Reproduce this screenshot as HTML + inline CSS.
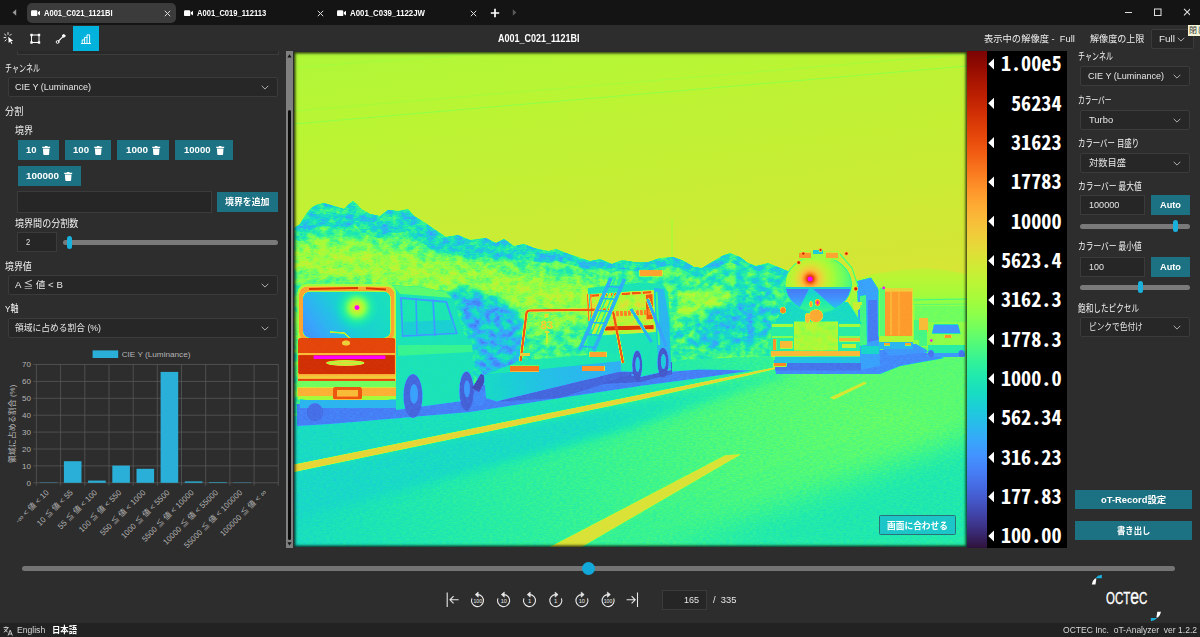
<!DOCTYPE html>
<html lang="ja"><head><meta charset="utf-8"><title>oT-Analyzer</title>
<style>
*{box-sizing:border-box;margin:0;padding:0}
html,body{width:1200px;height:637px;overflow:hidden;background:#2d2d2d;color:#e8e8e8;
 font-family:"Liberation Sans","Noto Sans CJK JP",sans-serif;font-size:10px}
.a{position:absolute}
.t{position:absolute;display:inline-block;white-space:pre;line-height:14px;height:14px;transform-origin:0 50%}
#title{left:0;top:0;width:1200px;height:25px;background:#141414}
.tab{position:absolute;top:3px;height:20px;border-radius:5px}
.tab.on{background:#3b3b3b}
#status{left:0;top:623px;width:1200px;height:14px;background:#222}
.sel{position:absolute;height:20px;background:#272727;border:1px solid #3b3b3b;border-radius:2px}
.sel svg{position:absolute;right:8.5px;top:7px}
.chip{position:absolute;height:20px;background:#1c7283}
.chip svg{position:absolute;right:8.5px;top:5.5px}
.btn{position:absolute;background:#1c7283}
.inp{position:absolute;background:#262626;border:1px solid #3b3b3b}
.track{position:absolute;height:5px;border-radius:3px;background:#7a7a7a}
.thumb{position:absolute;background:#19b0dc;border-radius:3px}
</style></head><body>
<div id="title" class="a">
<svg class="a" style="left:12px;top:9px" width="5" height="7" viewBox="0 0 5 7"><path d="M4.2 0.3 V6.7 L0.6 3.5 Z" fill="#9a9a9a"/></svg>
<div class="tab on" style="left:27px;width:149px"></div><svg class="a" style="left:30.8px;top:9.6px" width="9.6" height="6.4" viewBox="0 0 9.6 6.4" fill="#fff"><rect x="0" y="0.2" width="6.3" height="6" rx="1.2"/><path d="M6.9 2.3 L9.4 0.5 V5.9 L6.9 4.1 Z"/></svg>
<svg class="a" style="left:163.5px;top:9.5px" width="7" height="7" viewBox="0 0 7 7" fill="none" stroke="#dcdcdc" stroke-width="1"><path d="M0.8 0.8 L6.2 6.2 M6.2 0.8 L0.8 6.2"/></svg>
<div class="tab" style="left:180px;width:149px"></div><svg class="a" style="left:183.8px;top:9.6px" width="9.6" height="6.4" viewBox="0 0 9.6 6.4" fill="#fff"><rect x="0" y="0.2" width="6.3" height="6" rx="1.2"/><path d="M6.9 2.3 L9.4 0.5 V5.9 L6.9 4.1 Z"/></svg>
<svg class="a" style="left:316.5px;top:9.5px" width="7" height="7" viewBox="0 0 7 7" fill="none" stroke="#dcdcdc" stroke-width="1"><path d="M0.8 0.8 L6.2 6.2 M6.2 0.8 L0.8 6.2"/></svg>
<div class="tab" style="left:333px;width:149px"></div><svg class="a" style="left:336.8px;top:9.6px" width="9.6" height="6.4" viewBox="0 0 9.6 6.4" fill="#fff"><rect x="0" y="0.2" width="6.3" height="6" rx="1.2"/><path d="M6.9 2.3 L9.4 0.5 V5.9 L6.9 4.1 Z"/></svg>
<svg class="a" style="left:469.5px;top:9.5px" width="7" height="7" viewBox="0 0 7 7" fill="none" stroke="#dcdcdc" stroke-width="1"><path d="M0.8 0.8 L6.2 6.2 M6.2 0.8 L0.8 6.2"/></svg>
<svg class="a" style="left:489.5px;top:8px" width="10" height="10" viewBox="0 0 10 10" fill="none" stroke="#fff" stroke-width="1.7"><path d="M5 0.8 V9.2 M0.8 5 H9.2"/></svg>
<svg class="a" style="left:512px;top:9px" width="5" height="7" viewBox="0 0 5 7"><path d="M0.8 0.3 V6.7 L4.4 3.5 Z" fill="#5a5a5a"/></svg>
<svg class="a" style="left:1120px;top:6px" width="70" height="14" viewBox="0 0 70 14" fill="none" stroke="#e0e0e0" stroke-width="1"><path d="M5 6.5 H12"/><rect x="34.5" y="3" width="6.5" height="6.5"/><path d="M64 2.8 L70.5 9.3 M70.5 2.8 L64 9.3" stroke-width="1.1"/></svg>
</div>
<span class="t" id="t1" style="left:44px;top:5.8px;font-size:8.6px;font-weight:bold;color:#fff;transform:scaleX(0.8794);">A001_C021_1121BI</span>
<span class="t" id="t2" style="left:196.7px;top:5.8px;font-size:8.6px;font-weight:bold;color:#fff;transform:scaleX(0.8840);">A001_C019_112113</span>
<span class="t" id="t3" style="left:350px;top:5.8px;font-size:8.6px;font-weight:bold;color:#fff;transform:scaleX(0.9125);">A001_C039_1122JW</span>
<div class="a" style="left:73px;top:25.5px;width:26px;height:25.5px;background:#00b2dc"></div>
<svg class="a" style="left:0;top:25px" width="110" height="27" viewBox="0 0 110 27" fill="none" stroke="#fff" stroke-width="1.2" stroke-linecap="round">
 <path d="M8.2 11.8 L13.2 15.9 L11 16.1 L12.3 18.5 L11.5 18.9 L10.2 16.6 L8.7 18 Z" fill="#fff" stroke="none"/>
 <path d="M4.6 9.2 L6 10.4 M8 7.6 V9.4 M11.2 9.2 L10 10.4 M4 12.6 H5.8 M5 16 L6.2 14.8" stroke-width="0.9"/>
 <rect x="31.5" y="10" width="7.5" height="7.5" stroke-width="1"/>
 <g fill="#fff" stroke="none"><rect x="30.3" y="8.8" width="2.4" height="2.4"/><rect x="37.8" y="8.8" width="2.4" height="2.4"/><rect x="30.3" y="16.3" width="2.4" height="2.4"/><rect x="37.8" y="16.3" width="2.4" height="2.4"/></g>
 <path d="M58.4 16.2 L63 11.6" stroke-width="1.2"/>
 <circle cx="57.6" cy="17" r="1.4" stroke-width="0.9"/><circle cx="63.7" cy="10.9" r="1.3" fill="#fff" stroke-width="0.9"/>
 <path d="M82.2 18.4 V14.9 H84.6 V18.4 M84.6 14.9 V12.4 H87 V18.4 M87 12.4 V9.9 H89.6 V18.4 M81.4 18.5 H90.6" stroke-width="0.95" stroke-linecap="square"/>
</svg>
<span class="t" id="t4" style="left:497.5px;top:31.8px;font-size:10px;font-weight:bold;color:#fff;transform:scaleX(0.8992);">A001_C021_1121BI</span>
<span class="t" id="t5" style="left:983.6px;top:31.8px;font-size:9.6px;color:#ececec;transform:scaleX(0.9679);">表示中の解像度 -  Full</span>
<span class="t" id="t6" style="left:1090px;top:31.8px;font-size:9.6px;color:#ececec;transform:scaleX(0.9451);">解像度の上限</span>
<div class="sel" style="left:1151px;top:29px;width:43px;height:20px"><svg width="8" height="5" viewBox="0 0 8 5" fill="none" stroke="#b0b0b0" stroke-width="1"><path d="M0.7 0.8 L4 4.1 L7.3 0.8"/></svg></div>
<span class="t" id="t7" style="left:1159px;top:32px;font-size:9.3px;color:#e6e6e6;transform:scaleX(1.0678);">Full</span>
<div class="a" style="left:1188px;top:25px;width:12px;height:11px;background:#f5f5d8;color:#333;font-size:8px;line-height:11px;overflow:hidden;padding-left:1px;white-space:nowrap">閉じ</div>
<div class="a" style="left:17px;top:51px;width:262px;height:3.5px;border:1px solid #3c3c3c;border-top:none;background:#292929"></div>
<span class="t" id="t8" style="left:5px;top:61.5px;font-size:9.8px;color:#f4f4f4;transform:scaleX(0.7186);">チャンネル</span>
<div class="sel" style="left:8px;top:77px;width:270px;height:20px"><svg width="8" height="5" viewBox="0 0 8 5" fill="none" stroke="#b0b0b0" stroke-width="1"><path d="M0.7 0.8 L4 4.1 L7.3 0.8"/></svg></div>
<span class="t" id="t9" style="left:15px;top:80.2px;font-size:9.3px;color:#e6e6e6;transform:scaleX(0.9718);">CIE Y (Luminance)</span>
<span class="t" id="t10" style="left:4.7px;top:105px;font-size:9.8px;color:#f4f4f4;transform:scaleX(0.9340);">分割</span>
<span class="t" id="t11" style="left:15px;top:124.3px;font-size:9.8px;color:#f4f4f4;transform:scaleX(0.9187);">境界</span>
<div class="chip" style="left:18px;top:140px;width:41px"><svg width="8.4" height="9" viewBox="0 0 8 9" fill="#fff"><path d="M2.7 0 H5.3 V0.8 H8 V1.9 H0 V0.8 H2.7 Z M0.7 2.6 H7.3 L6.9 8.2 Q6.85 9 6.1 9 H1.9 Q1.15 9 1.1 8.2 Z"/></svg></div>
<span class="t" id="t12" style="left:26px;top:143px;font-size:9px;font-weight:bold;color:#fff;transform:scaleX(1.0484);">10</span>
<div class="chip" style="left:65px;top:140px;width:46px"><svg width="8.4" height="9" viewBox="0 0 8 9" fill="#fff"><path d="M2.7 0 H5.3 V0.8 H8 V1.9 H0 V0.8 H2.7 Z M0.7 2.6 H7.3 L6.9 8.2 Q6.85 9 6.1 9 H1.9 Q1.15 9 1.1 8.2 Z"/></svg></div>
<span class="t" id="t13" style="left:73px;top:143px;font-size:9px;font-weight:bold;color:#fff;transform:scaleX(1.0644);">100</span>
<div class="chip" style="left:117px;top:140px;width:52px"><svg width="8.4" height="9" viewBox="0 0 8 9" fill="#fff"><path d="M2.7 0 H5.3 V0.8 H8 V1.9 H0 V0.8 H2.7 Z M0.7 2.6 H7.3 L6.9 8.2 Q6.85 9 6.1 9 H1.9 Q1.15 9 1.1 8.2 Z"/></svg></div>
<span class="t" id="t14" style="left:125.5px;top:143px;font-size:9px;font-weight:bold;color:#fff;transform:scaleX(1.0983);">1000</span>
<div class="chip" style="left:175px;top:140px;width:58px"><svg width="8.4" height="9" viewBox="0 0 8 9" fill="#fff"><path d="M2.7 0 H5.3 V0.8 H8 V1.9 H0 V0.8 H2.7 Z M0.7 2.6 H7.3 L6.9 8.2 Q6.85 9 6.1 9 H1.9 Q1.15 9 1.1 8.2 Z"/></svg></div>
<span class="t" id="t15" style="left:183.5px;top:143px;font-size:9px;font-weight:bold;color:#fff;transform:scaleX(1.0587);">10000</span>
<div class="chip" style="left:18px;top:166px;width:63px"><svg width="8.4" height="9" viewBox="0 0 8 9" fill="#fff"><path d="M2.7 0 H5.3 V0.8 H8 V1.9 H0 V0.8 H2.7 Z M0.7 2.6 H7.3 L6.9 8.2 Q6.85 9 6.1 9 H1.9 Q1.15 9 1.1 8.2 Z"/></svg></div>
<span class="t" id="t16" style="left:26px;top:169px;font-size:9px;font-weight:bold;color:#fff;transform:scaleX(1.0983);">100000</span>
<div class="inp" style="left:17px;top:191px;width:195px;height:21.5px"></div>
<div class="btn" style="left:217px;top:192px;width:61px;height:20px"></div>
<span class="t" id="t17" style="left:225.3px;top:195px;font-size:9.2px;font-weight:bold;color:#fff;transform:scaleX(0.9687);">境界を追加</span>
<span class="t" id="t18" style="left:15px;top:217.4px;font-size:9.8px;color:#f4f4f4;transform:scaleX(0.9245);">境界間の分割数</span>
<div class="inp" style="left:17px;top:232px;width:40px;height:20px"></div>
<span class="t" id="t19" style="left:25.7px;top:235.3px;font-size:9.3px;color:#e6e6e6;transform:scaleX(0.8121);">2</span>
<div class="track" style="left:63px;top:240px;width:215px"></div><div class="thumb" style="left:67px;top:236px;width:5px;height:13px"></div>
<span class="t" id="t20" style="left:4.7px;top:259.5px;font-size:9.8px;color:#f4f4f4;transform:scaleX(0.9085);">境界値</span>
<div class="sel" style="left:8px;top:275px;width:270px;height:20px"><svg width="8" height="5" viewBox="0 0 8 5" fill="none" stroke="#b0b0b0" stroke-width="1"><path d="M0.7 0.8 L4 4.1 L7.3 0.8"/></svg></div>
<span class="t" id="t21" style="left:15px;top:278.3px;font-size:9.3px;color:#e6e6e6;transform:scaleX(1.0335);">A ≦ 値 &lt; B</span>
<span class="t" id="t22" style="left:4.7px;top:302.3px;font-size:9.8px;color:#f4f4f4;transform:scaleX(0.8260);">Y軸</span>
<div class="sel" style="left:8px;top:318px;width:270px;height:20px"><svg width="8" height="5" viewBox="0 0 8 5" fill="none" stroke="#b0b0b0" stroke-width="1"><path d="M0.7 0.8 L4 4.1 L7.3 0.8"/></svg></div>
<span class="t" id="t23" style="left:15px;top:321.3px;font-size:9.3px;color:#e6e6e6;transform:scaleX(0.9407);">領域に占める割合 (%)</span>
<svg class="a" style="left:0;top:340px" width="286" height="210" viewBox="0 340 286 210" font-family="Liberation Sans, Noto Sans CJK JP, sans-serif">
<rect x="92.6" y="350.4" width="25.6" height="7.6" fill="#2ab0d8"/>
<text x="121.7" y="356.6" font-size="8" fill="#b4b4b4" textLength="68.8" lengthAdjust="spacingAndGlyphs">CIE Y (Luminance)</text>
<path d="M33.4 482.8 H278.3 M33.4 465.9 H278.3 M33.4 449.0 H278.3 M33.4 432.1 H278.3 M33.4 415.2 H278.3 M33.4 398.3 H278.3 M33.4 381.4 H278.3 M33.4 364.5 H278.3 M36.4 364.5 V485.8 M60.6 364.5 V485.8 M84.8 364.5 V485.8 M109.0 364.5 V485.8 M133.2 364.5 V485.8 M157.3 364.5 V485.8 M181.5 364.5 V485.8 M205.7 364.5 V485.8 M229.9 364.5 V485.8 M254.1 364.5 V485.8 M278.3 364.5 V485.8" stroke="#575757" stroke-width="0.8" fill="none"/>
<text x="31" y="485.7" font-size="8" fill="#b4b4b4" text-anchor="end">0</text>
<text x="31" y="468.8" font-size="8" fill="#b4b4b4" text-anchor="end">10</text>
<text x="31" y="451.9" font-size="8" fill="#b4b4b4" text-anchor="end">20</text>
<text x="31" y="435.0" font-size="8" fill="#b4b4b4" text-anchor="end">30</text>
<text x="31" y="418.1" font-size="8" fill="#b4b4b4" text-anchor="end">40</text>
<text x="31" y="401.2" font-size="8" fill="#b4b4b4" text-anchor="end">50</text>
<text x="31" y="384.3" font-size="8" fill="#b4b4b4" text-anchor="end">60</text>
<text x="31" y="367.4" font-size="8" fill="#b4b4b4" text-anchor="end">70</text>
<rect x="39.7" y="482.5" width="17.6" height="0.3" fill="#2ab0d8"/>
<rect x="63.9" y="461.2" width="17.6" height="21.6" fill="#2ab0d8"/>
<rect x="88.1" y="480.6" width="17.6" height="2.2" fill="#2ab0d8"/>
<rect x="112.3" y="465.6" width="17.6" height="17.2" fill="#2ab0d8"/>
<rect x="136.5" y="468.8" width="17.6" height="14.0" fill="#2ab0d8"/>
<rect x="160.6" y="371.9" width="17.6" height="110.9" fill="#2ab0d8"/>
<rect x="184.8" y="481.4" width="17.6" height="1.4" fill="#2ab0d8"/>
<rect x="209.0" y="482.2" width="17.6" height="0.6" fill="#2ab0d8"/>
<rect x="233.2" y="482.5" width="17.6" height="0.3" fill="#2ab0d8"/>
<text transform="translate(49.3 493.0) rotate(-45)" font-size="8" fill="#b4b4b4" text-anchor="end">-∞ &lt; 値 &lt; 10</text>
<text transform="translate(73.5 493.0) rotate(-45)" font-size="8" fill="#b4b4b4" text-anchor="end">10 ≦ 値 &lt; 55</text>
<text transform="translate(97.7 493.0) rotate(-45)" font-size="8" fill="#b4b4b4" text-anchor="end">55 ≦ 値 &lt; 100</text>
<text transform="translate(121.9 493.0) rotate(-45)" font-size="8" fill="#b4b4b4" text-anchor="end">100 ≦ 値 &lt; 550</text>
<text transform="translate(146.1 493.0) rotate(-45)" font-size="8" fill="#b4b4b4" text-anchor="end">550 ≦ 値 &lt; 1000</text>
<text transform="translate(170.2 493.0) rotate(-45)" font-size="8" fill="#b4b4b4" text-anchor="end">1000 ≦ 値 &lt; 5500</text>
<text transform="translate(194.4 493.0) rotate(-45)" font-size="8" fill="#b4b4b4" text-anchor="end">5500 ≦ 値 &lt; 10000</text>
<text transform="translate(218.6 493.0) rotate(-45)" font-size="8" fill="#b4b4b4" text-anchor="end">10000 ≦ 値 &lt; 55000</text>
<text transform="translate(242.8 493.0) rotate(-45)" font-size="8" fill="#b4b4b4" text-anchor="end">55000 ≦ 値 &lt; 100000</text>
<text transform="translate(267.0 493.0) rotate(-45)" font-size="8" fill="#b4b4b4" text-anchor="end">100000 ≦ 値 &lt; ∞</text>
<text transform="translate(14.5 424) rotate(-90)" font-size="8" fill="#b4b4b4" text-anchor="middle">領域に占める割合 (%)</text>
</svg>
<div class="a" style="left:286px;top:51px;width:7px;height:497px;background:#808080"></div>
<div class="a" style="left:288px;top:110px;width:3px;height:430px;background:#0c0c0c;border-radius:2px"></div>
<svg class="a" style="left:286px;top:51px" width="7" height="497" viewBox="0 0 7 497" fill="#111"><path d="M1.4 6.5 L3.5 3.2 L5.6 6.5 Z M1.4 491.2 L3.5 494.5 L5.6 491.2 Z"/></svg>
<svg class="a" style="left:294px;top:52px" width="673" height="495" viewBox="294 52 673 495">
<defs><filter id="tf" filterUnits="userSpaceOnUse" x="294" y="52" width="673" height="495" color-interpolation-filters="sRGB">
<feGaussianBlur in="SourceGraphic" stdDeviation="0.55" result="src"/>
<feColorMatrix in="src" type="matrix" values="1 0 0 0 0  1 0 0 0 0  1 0 0 0 0  0 0 0 0 1" result="lum"/>
<feColorMatrix in="src" type="matrix" values="0 1 0 0 0  0 1 0 0 0  0 1 0 0 0  0 0 0 0 1" result="ag"/>
<feColorMatrix in="src" type="matrix" values="0 0 1 0 0  0 0 1 0 0  0 0 1 0 0  0 0 0 0 1" result="ab"/>
<feTurbulence type="fractalNoise" baseFrequency="0.3 0.75" numOctaves="2" seed="3" result="t1"/>
<feColorMatrix in="t1" type="matrix" values="1.6 0 0 0 -0.3  1.6 0 0 0 -0.3  1.6 0 0 0 -0.3  0 0 0 0 1" result="n1"/>
<feTurbulence type="fractalNoise" baseFrequency="0.11 0.13" numOctaves="3" seed="11" result="t2"/>
<feColorMatrix in="t2" type="matrix" values="2.2 0 0 0 -0.6  2.2 0 0 0 -0.6  2.2 0 0 0 -0.6  0 0 0 0 1" result="n2"/>
<feComposite in="ag" in2="n1" operator="arithmetic" k1="1" k2="0" k3="0" k4="0" result="m1"/>
<feComposite in="ab" in2="n2" operator="arithmetic" k1="1" k2="0" k3="0" k4="0" result="m2"/>
<feComposite in="lum" in2="m1" operator="arithmetic" k1="0" k2="1" k3="1" k4="0" result="s1"/>
<feComposite in="s1" in2="m2" operator="arithmetic" k1="0" k2="1" k3="1" k4="0" result="s2"/>
<feComponentTransfer in="s2"><feFuncR type="table" tableValues="0.188 0.224 0.251 0.267 0.275 0.275 0.259 0.216 0.157 0.110 0.094 0.122 0.196 0.306 0.427 0.545 0.643 0.725 0.804 0.875 0.933 0.973 0.992 0.996 0.984 0.957 0.922 0.875 0.816 0.745 0.663 0.573 0.478"/><feFuncG type="table" tableValues="0.071 0.165 0.251 0.337 0.420 0.502 0.580 0.659 0.737 0.804 0.867 0.914 0.949 0.976 0.996 1.000 0.988 0.965 0.925 0.875 0.812 0.745 0.675 0.588 0.494 0.400 0.314 0.247 0.184 0.129 0.086 0.043 0.016"/><feFuncB type="table" tableValues="0.231 0.451 0.635 0.780 0.890 0.965 1.000 0.980 0.922 0.847 0.761 0.686 0.596 0.490 0.384 0.294 0.235 0.208 0.204 0.216 0.227 0.224 0.204 0.169 0.129 0.090 0.055 0.031 0.020 0.008 0.004 0.004 0.012"/></feComponentTransfer>
</filter>
<linearGradient id="g1" gradientUnits="userSpaceOnUse" x1="294" y1="52" x2="344" y2="391"><stop offset="0" stop-color="#840000"/><stop offset="1" stop-color="#950000"/></linearGradient><linearGradient id="g2" gradientUnits="userSpaceOnUse" x1="0" y1="268" x2="0" y2="306"><stop offset="0" stop-color="#8c0000"/><stop offset="0.6" stop-color="#820000"/><stop offset="1" stop-color="#790000"/></linearGradient><linearGradient id="g3" gradientUnits="userSpaceOnUse" x1="294" y1="560" x2="900" y2="380"><stop offset="0" stop-color="#4b0b00"/><stop offset="0.35" stop-color="#570b00"/><stop offset="0.7" stop-color="#620b00"/><stop offset="1" stop-color="#680b00"/></linearGradient><linearGradient id="g4" gradientUnits="userSpaceOnUse" x1="294" y1="440" x2="780" y2="360"><stop offset="0" stop-color="#4a0a00"/><stop offset="0.7" stop-color="#520a00"/><stop offset="1" stop-color="#5c0a00"/></linearGradient><linearGradient id="g5" gradientUnits="userSpaceOnUse" x1="294" y1="500" x2="790" y2="370"><stop offset="0" stop-color="#490a00"/><stop offset="0.6" stop-color="#4a0a00"/><stop offset="1" stop-color="#5c0a00"/></linearGradient><linearGradient id="g6" gradientUnits="userSpaceOnUse" x1="380" y1="291" x2="310" y2="340"><stop offset="0" stop-color="#500300"/><stop offset="0.5" stop-color="#470300"/><stop offset="1" stop-color="#2f0300"/></linearGradient><radialGradient id="g7" gradientUnits="userSpaceOnUse" cx="357" cy="307.5" r="25"><stop offset="0" stop-color="#a30000" stop-opacity="1"/><stop offset="0.14" stop-color="#910000" stop-opacity="1"/><stop offset="0.3" stop-color="#7a0000" stop-opacity="1"/><stop offset="0.55" stop-color="#610000" stop-opacity="0.75"/><stop offset="1" stop-color="#4a0000" stop-opacity="0"/></radialGradient><linearGradient id="g8" gradientUnits="userSpaceOnUse" x1="0" y1="374" x2="0" y2="381"><stop offset="0" stop-color="#b20000"/><stop offset="0.6" stop-color="#990000"/><stop offset="0.75" stop-color="#d60000"/><stop offset="1" stop-color="#cc0000"/></linearGradient><linearGradient id="g9" gradientUnits="userSpaceOnUse" x1="484" y1="380" x2="621" y2="366"><stop offset="0" stop-color="#4c0500"/><stop offset="0.4" stop-color="#400500"/><stop offset="1" stop-color="#380500"/></linearGradient><radialGradient id="g10" gradientUnits="userSpaceOnUse" cx="810.1" cy="278.9" r="42"><stop offset="0" stop-color="#f20000"/><stop offset="0.06" stop-color="#db0000"/><stop offset="0.13" stop-color="#bd0000"/><stop offset="0.22" stop-color="#a30000"/><stop offset="0.38" stop-color="#8e0000"/><stop offset="0.65" stop-color="#780000"/><stop offset="1" stop-color="#660000"/></radialGradient><linearGradient id="g11" gradientUnits="userSpaceOnUse" x1="0" y1="287.3" x2="0" y2="313"><stop offset="0" stop-color="#240000"/><stop offset="0.4" stop-color="#2e0000"/><stop offset="1" stop-color="#4c0000"/></linearGradient><linearGradient id="g12" gradientUnits="userSpaceOnUse" x1="0" y1="289" x2="0" y2="313"><stop offset="0" stop-color="#470000"/><stop offset="1" stop-color="#660000"/></linearGradient><filter id="b5" x="-20%" y="-20%" width="140%" height="140%" color-interpolation-filters="sRGB"><feGaussianBlur stdDeviation="5"/></filter><filter id="b3" x="-20%" y="-20%" width="140%" height="140%" color-interpolation-filters="sRGB"><feGaussianBlur stdDeviation="2.5"/></filter><filter id="b16" x="-30%" y="-30%" width="160%" height="160%" color-interpolation-filters="sRGB"><feGaussianBlur stdDeviation="16"/></filter>
<clipPath id="imc"><rect x="294" y="52" width="673" height="495"/></clipPath></defs>
<g clip-path="url(#imc)"><g filter="url(#tf)">
<rect x="294" y="52" width="673" height="495" fill="url(#g1)"/>
<path d="M294 67.5 L500 52" fill="none" stroke="#7c0000" stroke-width="0.7"/>
<path d="M294 111 L967 54" fill="none" stroke="#7d0000" stroke-width="0.7"/>
<path d="M294 124 L967 66" fill="none" stroke="#750000" stroke-width="0.8"/>
<polygon points="850,282 872,274 900,270 925,268 945,270 967,274 967,350 850,350" fill="url(#g2)"/>
<rect x="880" y="298" width="87" height="28" fill="#780300"/>
<path d="M884 300.5 L967 299" fill="none" stroke="#660000" stroke-width="1.2"/>
<path d="M884 305 L967 304" fill="none" stroke="#6b0000" stroke-width="1"/>
<rect x="915" y="306" width="52" height="16" fill="#6e0500"/>
<path d="M672 219 L672 258" fill="none" stroke="#780000" stroke-width="0.9"/>
<polygon points="294,228 300,224 306,214 311,208 316,205 324,203 334,206 344,209 349,204 353,201 357,204 360,208 370,214 380,216 388,210 398,211 408,209 414,216 424,222 434,229 446,237 458,235 470,240 486,238 496,243 504,239 514,246 524,244 534,248 548,251 556,249 566,253 578,257 590,261 600,259 612,264 622,260 634,262 648,262 660,258 673,257 684,261 694,267 702,268 712,262 722,256 730,253 740,257 748,263 756,266 768,263 778,267 790,272 800,300 800,358 680,361 294,440" fill="#4b0f22"/>
<polygon points="294,228 300,224 306,214 311,208 316,205 324,203 334,206 344,209 349,204 353,201 357,204 360,208 370,214 380,216 388,210 398,211 408,209 414,216 424,222 434,229 446,237 458,235 470,240 486,238 496,243 504,239 514,246 524,244 534,248 548,251 556,249 566,253 578,257 590,261 600,259 612,264 622,260 634,262 648,262 660,258 673,257 684,261 694,267 702,268 712,262 722,256 730,253 740,257 748,263 756,266 768,263 778,267 790,272 790,290 790,281 778,276 768,272 756,275 748,272 740,266 730,262 722,265 712,271 702,277 694,276 684,270 673,266 660,267 648,271 634,271 622,269 612,273 600,268 590,270 578,266.58 566,263.66 556,260.56 548,263.28 534,261.54 524,258.44 514,261.34 504,255.24 496,259.96 486,255.86 470,259.3 458,255.38 446,258.46 434,251 424,244 414,238 408,231 398,233 388,232 380,238 370,236 360,230 357,226 353,223 349,226 344,231 334,228 324,225 316,227 311,230 306,236 300,246 294,250" fill="#301a25"/>
<polygon points="294,240 330,236 380,240 430,252 500,264 560,274 620,284 690,294 700,305 640,318 560,330 500,336 450,316 400,288 294,284" fill="#5d141c" filter="url(#b5)"/>
<polygon points="294,246 360,248 420,262 480,276 560,286 620,296 600,310 520,304 450,296 380,276 294,270" fill="#691418" filter="url(#b5)"/>
<polygon points="440,292 470,288 500,300 522,318 524,368 480,388 470,340 455,305" fill="#230f2b" filter="url(#b5)"/>
<polygon points="668,285 700,280 730,272 760,275 785,280 790,335 672,358" fill="#3d0f2e" filter="url(#b5)"/>
<polygon points="700,302 740,294 770,300 770,335 700,350" fill="#2d0f2b" filter="url(#b5)"/>
<polygon points="676,290 720,286 744,296 704,314 676,322" fill="#630f1f" filter="url(#b5)"/>
<polygon points="294,416 400,408 500,392 600,376 680,360 772,356 880,344 967,350 967,547 294,547" fill="url(#g3)"/>
<polygon points="640,560 990,560 990,430" fill="#520b00" filter="url(#b16)"/>
<polygon points="294,416 500,392 600,376 680,360 772,356 776,367 640,395 294,465" fill="url(#g4)"/>
<polygon points="294,472 640,400 776,369 800,372 640,425 294,520" fill="url(#g5)" filter="url(#b5)"/>
<polygon points="776,372 967,356 967,420 880,400" fill="#670800" filter="url(#b5)"/>
<polygon points="297,404 398,398 480,384 505,388 560,382 640,374 700,369.5 752,370.5 700,378 640,386 560,398 470,412 330,424 297,426" fill="#240800"/>
<polygon points="774,360 880,350 916,350 944,358 900,366 880,374 776,374" fill="#280800"/>
<polygon points="880,346 916,344 930,352 890,356" fill="#300500"/>
<polygon points="294,464.6 640,394.8 750,372.6 776,366.9 776,368.7 750,375 640,399.8 294,472" fill="#9a0300"/>
<polygon points="725.4,455.3 741,454.3 581.5,547 550,547" fill="#940300"/>
<polygon points="830,397.5 864,382 867,383.3 834,399.5" fill="#930300"/>
<polygon points="392,285 420,287 446,292 454,300 464,334 472,342 474,388 470,400 396,410" fill="#520400"/>
<polygon points="392,285 420,287 446,292 452,298 400,294" fill="#6a0300"/>
<polygon points="400,297 447,301 458,334 402,337" fill="#300500"/>
<polygon points="402,299 445.5,302.8 455.5,332.5 403.5,335" fill="#530500"/>
<polygon points="404,322 452,320 455.5,332.5 403.5,335" fill="#470500"/>
<path d="M416 298 L417 336" fill="none" stroke="#330000" stroke-width="1.6"/>
<path d="M433 299.5 L435 336" fill="none" stroke="#330000" stroke-width="1.8"/>
<polygon points="398,345 472,345 473,352 398,356" fill="#600300"/>
<ellipse cx="413" cy="396" rx="9.5" ry="22" fill="#1c0500"/>
<ellipse cx="414" cy="394" rx="4" ry="10" fill="#330500"/>
<ellipse cx="466.5" cy="391" rx="7.2" ry="19.5" fill="#1a0500"/>
<ellipse cx="467" cy="389" rx="3" ry="8.5" fill="#300500"/>
<ellipse cx="315" cy="412" rx="8" ry="9" fill="#1f0500"/>
<rect x="300" y="399" width="96" height="9" fill="#3b0500"/>
<ellipse cx="315" cy="412" rx="8" ry="9" fill="#1f0500"/>
<ellipse cx="479.5" cy="398" rx="6.5" ry="8.5" fill="#290500"/>
<polygon points="472,388 481,373.5 487,377.5 479,392" fill="#120500"/>
<rect x="297.5" y="284" width="98.5" height="116" rx="9" fill="#7e0200"/>
<rect x="299" y="286.5" width="95.5" height="54" rx="8" fill="#b10200"/>
<path d="M309 289 L358 288" fill="none" stroke="#db0000" stroke-width="2"/>
<path d="M366 288.2 L386 289.5" fill="none" stroke="#db0000" stroke-width="2"/>
<rect x="303" y="291.5" width="87.5" height="46.5" rx="7" fill="url(#g6)"/>
<rect x="303" y="291.5" width="87.5" height="46.5" rx="5" fill="url(#g7)"/>
<path d="M330 332 L344 333 L352 340" fill="none" stroke="#9e0000" stroke-width="1.3"/>
<rect x="298" y="338" width="97.5" height="36.5" rx="2" fill="#d20300"/>
<rect x="298" y="353" width="97.5" height="2.2" fill="#a70300"/>
<rect x="299" y="355.2" width="95.5" height="19" fill="#dd0300"/>
<ellipse cx="345.3" cy="363" rx="19" ry="2.7" fill="#800000"/>
<ellipse cx="345.3" cy="363" rx="15" ry="1.2" fill="#990000"/>
<ellipse cx="346" cy="343" rx="4" ry="2.5" fill="#9e0000"/>
<rect x="298" y="374" width="97.5" height="7" fill="url(#g8)"/>
<rect x="297.5" y="381" width="98.5" height="6.5" fill="#6f0300"/>
<rect x="297.5" y="387.5" width="36" height="8.5" fill="#ac0300"/>
<rect x="362" y="387.5" width="34" height="8.5" fill="#ac0300"/>
<rect x="297.5" y="396" width="98.5" height="3.5" fill="#7e0300"/>
<rect x="333" y="387" width="29" height="12.5" rx="1.5" fill="#cb0300"/>
<rect x="337" y="390" width="21" height="6.5" fill="#a70300"/>
<polygon points="600,372 672,362 672,374 640,382 600,384" fill="#1a0500"/>
<polygon points="588,288 640,282.5 662,284 668,292 670,320 671,370 640,377 588,366" fill="#520500"/>
<polygon points="590,294 654,290 656,332 592,336" fill="#730a1f"/>
<polygon points="654,288 664,289 669,320 671,368 659,371 656,330" fill="#3b0500"/>
<path d="M656.5 292 L659 345" fill="none" stroke="#660000" stroke-width="2.2"/>
<rect x="639.5" y="270" width="23" height="6.3" fill="#b10300"/>
<path d="M590 295.8 L652 292.2" fill="none" stroke="#cc0000" stroke-width="2.6" stroke-dasharray="9 1.5"/>
<path d="M587.5 294 L589 321" fill="none" stroke="#c20000" stroke-width="1.8"/>
<path d="M590.6 294 L592 321" fill="none" stroke="#bd0000" stroke-width="1.6"/>
<polygon points="645.5,294.5 652.6,294 653.5,319 646.5,319.5" fill="#cc0000"/>
<path d="M616 313.8 L651 312.2" fill="none" stroke="#bd0000" stroke-width="5.5" stroke-dasharray="3 1"/>
<path d="M602.6 328.6 L653.7 327.2" fill="none" stroke="#db0000" stroke-width="4.2"/>
<polygon points="484,375 520,361 621,352 621,362" fill="#540500"/>
<polygon points="484,375 621,361 621,371.5 497,401.5 486,398" fill="url(#g9)"/>
<polygon points="497,401.5 621,371.5 640,372 560,398" fill="#1c0500"/>
<path d="M520.5 361 L526.5 313 Q527 310.5 530 310.5 L608 309.5 Q612.5 309.6 613.6 314 L623 363" fill="none" stroke="#cb0200" stroke-width="2.7"/>
<text x="546.8" y="329.3" font-family="Liberation Sans, sans-serif" font-weight="bold" font-size="11.5" text-anchor="middle" fill="#a80000">83</text>
<path d="M547 331.5 L547 343.5" fill="none" stroke="#990000" stroke-width="1.4"/>
<rect x="544.5" y="313.8" width="4" height="3.8" fill="#990000"/>
<ellipse cx="547" cy="332" rx="2.6" ry="1.2" fill="#990000"/>
<rect x="510" y="365.8" width="29" height="6" fill="#c20000"/>
<rect x="582" y="366" width="22.7" height="5" fill="#b80000"/>
<rect x="589.4" y="351.8" width="17.3" height="5.2" fill="#b20000"/>
<rect x="520" y="353" width="10" height="3" fill="#9e0000"/>
<path d="M579.5 350 L611 278" fill="none" stroke="#380500" stroke-width="3.6"/>
<path d="M593.5 351 L624.5 279" fill="none" stroke="#380500" stroke-width="3.6"/>
<path d="M584 350 L615 278.5" fill="none" stroke="#540500" stroke-width="1.4"/>
<path d="M589 350.5 L620 278.8" fill="none" stroke="#540500" stroke-width="1.4"/>
<path d="M581.075 346.4 L595.05 347.4" fill="none" stroke="#330000" stroke-width="1.2"/>
<path d="M586.325 334.4 L600.217 335.4" fill="none" stroke="#330000" stroke-width="1.2"/>
<path d="M591.575 322.4 L605.383 323.4" fill="none" stroke="#330000" stroke-width="1.2"/>
<path d="M596.825 310.4 L610.55 311.4" fill="none" stroke="#330000" stroke-width="1.2"/>
<path d="M602.075 298.4 L615.717 299.4" fill="none" stroke="#330000" stroke-width="1.2"/>
<path d="M607.325 286.4 L620.883 287.4" fill="none" stroke="#330000" stroke-width="1.2"/>
<path d="M647.5 299 L666 346" fill="none" stroke="#330500" stroke-width="3.2"/>
<path d="M631 309 L651.6 342" fill="none" stroke="#380500" stroke-width="3"/>
<ellipse cx="637.2" cy="365.5" rx="5" ry="15" fill="#170500"/>
<ellipse cx="663" cy="362.5" rx="5.6" ry="14.8" fill="#170500"/>
<ellipse cx="637.6" cy="364.5" rx="2.2" ry="7.5" fill="#470000"/>
<ellipse cx="663.4" cy="361.5" rx="2.5" ry="7.5" fill="#470000"/>
<polygon points="857,281 871,277.5 879,290 880,366 860,370" fill="#330500"/>
<polygon points="860,296 866,295 867,345 860,346" fill="#630500"/>
<polygon points="868,300 877,300 878,340 868,342" fill="#240500"/>
<rect x="861" y="346" width="18" height="8" fill="#4a0500"/>
<polygon points="774,324 788,302 848,302 862,324" fill="#4b0800"/>
<clipPath id="tk"><ellipse cx="818.2" cy="284.5" rx="32.8" ry="27.8"/></clipPath>
<ellipse cx="818.2" cy="284.5" rx="33.8" ry="28.8" fill="#5c0000"/>
<g clip-path="url(#tk)">
<rect x="780" y="250" width="80" height="70" fill="url(#g10)"/>
<rect x="780" y="287.3" width="80" height="34" fill="url(#g11)"/>
<polygon points="797,313 809,289 813,289 840,313" fill="url(#g12)"/>
<polygon points="785,287.3 851,287.3 851,289 785,289" fill="#4c0000"/>
</g>
<rect x="798.5" y="251" width="40.5" height="8.5" fill="#7e0300"/>
<rect x="799" y="252.5" width="12" height="5.5" fill="#b80000"/>
<rect x="826" y="252.5" width="12" height="5.5" fill="#b20000"/>
<rect x="813" y="250" width="10" height="4" fill="#470000"/>
<path d="M840 254 L852 268 L858 286" fill="none" stroke="#660000" stroke-width="1.4"/>
<ellipse cx="803.3" cy="253.6" rx="2.1" ry="2.1" fill="#b20000"/>
<ellipse cx="803.3" cy="253.6" rx="1.2" ry="1.2" fill="#e60000"/>
<ellipse cx="820.5" cy="250" rx="1.9" ry="1.9" fill="#b20000"/>
<ellipse cx="820.5" cy="250" rx="1" ry="1" fill="#e60000"/>
<ellipse cx="846.4" cy="253.6" rx="2.1" ry="2.1" fill="#b20000"/>
<ellipse cx="846.4" cy="253.6" rx="1.2" ry="1.2" fill="#e60000"/>
<ellipse cx="798.7" cy="262.6" rx="2.2" ry="2.2" fill="#b20000"/>
<ellipse cx="798.7" cy="262.6" rx="1.3" ry="1.3" fill="#e60000"/>
<ellipse cx="855.8" cy="288.8" rx="2.4" ry="2.4" fill="#b20000"/>
<ellipse cx="855.8" cy="288.8" rx="1.5" ry="1.5" fill="#e60000"/>
<rect x="771" y="323.5" width="89" height="33" fill="#590500"/>
<rect x="772" y="324" width="21" height="3" fill="#800000"/>
<rect x="839" y="324" width="21" height="3" fill="#800000"/>
<rect x="772" y="336" width="21" height="2" fill="#750000"/>
<rect x="839" y="336" width="21" height="2" fill="#750000"/>
<rect x="794" y="321.5" width="44" height="29" fill="#760612"/>
<rect x="773" y="339" width="3.2" height="11" fill="#b80000"/>
<rect x="780" y="341" width="12.5" height="7.5" fill="#a60500"/>
<rect x="839" y="338" width="21" height="3.4" fill="#ad0000"/>
<rect x="842" y="344" width="14" height="4" fill="#8c0000"/>
<rect x="771" y="351" width="89" height="5.6" fill="#a80300"/>
<rect x="775" y="356.6" width="85" height="6.4" fill="#400500"/>
<rect x="775" y="363" width="86" height="7.5" fill="#210500"/>
<rect x="773.5" y="363" width="13" height="3.6" fill="#bd0000"/>
<ellipse cx="816" cy="315.8" rx="7.2" ry="6.4" fill="#af0200"/>
<ellipse cx="807.5" cy="318" rx="2.6" ry="5" fill="#a80000"/>
<ellipse cx="817.6" cy="302.6" rx="2.6" ry="3.6" fill="#bd0000"/>
<ellipse cx="811" cy="304" rx="1.5" ry="3" fill="#b20000"/>
<ellipse cx="783" cy="310.3" rx="3" ry="3.2" fill="#bd0000"/>
<ellipse cx="856.7" cy="306" rx="3.6" ry="4.2" fill="#910000"/>
<rect x="853" y="302" width="9" height="3" fill="#8c0000"/>
<rect x="878.5" y="287" width="35" height="50" rx="1.5" fill="#800000"/>
<rect x="879.5" y="288" width="6" height="48" fill="#6b0000"/>
<rect x="885" y="288.5" width="27.5" height="47.5" fill="#b40200"/>
<rect x="885" y="288.5" width="27.5" height="3" fill="#9e0000"/>
<path d="M891 291 L891 335" fill="none" stroke="#a10000" stroke-width="1"/>
<path d="M899 291 L899 335" fill="none" stroke="#a80000" stroke-width="0.8"/>
<rect x="879" y="337" width="34" height="5" fill="#850000"/>
<rect x="880" y="342" width="33" height="7" fill="#3b0500"/>
<rect x="884" y="343" width="6" height="2.5" fill="#b20000"/>
<rect x="905" y="343" width="6" height="2.5" fill="#b20000"/>
<rect x="919" y="318" width="9" height="14" fill="#a80000"/>
<rect x="914" y="320" width="5" height="20" fill="#660000"/>
<path d="M927.5 353.5 L927 338 Q928 331 931.5 327 L933.5 322.5 Q946 320.5 958.5 322.5 L961.5 328 Q965 332 965 339 L965 353.5 Z" fill="#770300"/>
<polygon points="934,324.5 958,324.5 960.5,333.5 932,333.5" fill="#2f0300"/>
<rect x="928" y="345" width="37" height="8.5" fill="#5a0300"/>
<rect x="944.5" y="335" width="7" height="3" fill="#b80000"/>
<rect x="927" y="353" width="38" height="4" fill="#300500"/>
<ellipse cx="931" cy="353.5" rx="3" ry="3.5" fill="#240000"/>
<ellipse cx="961.5" cy="353.5" rx="3" ry="3.5" fill="#240000"/>
<rect x="919" y="330" width="8" height="16" fill="#630500"/>
</g>
<circle cx="357" cy="307.6" r="2.4" fill="#ff00ff"/><rect x="313.5" y="355.6" width="72" height="3.3" rx="1.2" fill="#ff00ff"/><circle cx="810.1" cy="278.9" r="2.5" fill="#ff00ff"/><circle cx="883.7" cy="287.9" r="1.3" fill="#ff00ff"/><ellipse cx="817.6" cy="302.6" rx="0.9" ry="1.5" fill="#ff00ff"/><circle cx="931.3" cy="340.5" r="1.2" fill="#ff00ff"/>
</g>
</svg>
<div class="a" style="left:294px;top:52px;width:673px;height:495px;box-shadow:inset 0 0 2.5px 1.5px rgba(0,0,0,.75)"></div>
<div class="a" style="left:879px;top:515px;width:77px;height:20px;background:#1cc5c8;border:1px solid #2c7078;border-radius:1.5px"></div>

<span class="t" id="t24" style="left:886.8px;top:519px;font-size:9px;font-weight:bold;color:#fff;transform:scaleX(0.9680);">画面に合わせる</span>
<svg class="a" style="left:967px;top:51px" width="100" height="497" viewBox="967 51 100 497">
<defs><linearGradient id="tb" x1="0" y1="0" x2="0" y2="1"><stop offset="0.0000" stop-color="#7a0403"/><stop offset="0.0312" stop-color="#920b01"/><stop offset="0.0625" stop-color="#a91601"/><stop offset="0.0938" stop-color="#be2102"/><stop offset="0.1250" stop-color="#d02f05"/><stop offset="0.1562" stop-color="#df3f08"/><stop offset="0.1875" stop-color="#eb500e"/><stop offset="0.2188" stop-color="#f46617"/><stop offset="0.2500" stop-color="#fb7e21"/><stop offset="0.2812" stop-color="#fe962b"/><stop offset="0.3125" stop-color="#fdac34"/><stop offset="0.3438" stop-color="#f8be39"/><stop offset="0.3750" stop-color="#eecf3a"/><stop offset="0.4062" stop-color="#dfdf37"/><stop offset="0.4375" stop-color="#cdec34"/><stop offset="0.4688" stop-color="#b9f635"/><stop offset="0.5000" stop-color="#a4fc3c"/><stop offset="0.5312" stop-color="#8bff4b"/><stop offset="0.5625" stop-color="#6dfe62"/><stop offset="0.5938" stop-color="#4ef97d"/><stop offset="0.6250" stop-color="#32f298"/><stop offset="0.6562" stop-color="#1fe9af"/><stop offset="0.6875" stop-color="#18ddc2"/><stop offset="0.7188" stop-color="#1ccdd8"/><stop offset="0.7500" stop-color="#28bceb"/><stop offset="0.7812" stop-color="#37a8fa"/><stop offset="0.8125" stop-color="#4294ff"/><stop offset="0.8438" stop-color="#4680f6"/><stop offset="0.8750" stop-color="#466be3"/><stop offset="0.9062" stop-color="#4456c7"/><stop offset="0.9375" stop-color="#4040a2"/><stop offset="0.9688" stop-color="#392a73"/><stop offset="1.0000" stop-color="#30123b"/></linearGradient></defs>
<rect x="987" y="51" width="80" height="497" fill="#000"/>
<rect x="967" y="51" width="20" height="497" fill="url(#tb)"/>
<g font-family="Noto Sans Mono CJK JP, Liberation Mono, monospace" font-weight="bold" font-size="20" fill="#fff">
<text x="1061.5" y="71.3" text-anchor="end" textLength="60.6" lengthAdjust="spacingAndGlyphs">1.00e5</text>
<text x="1061.5" y="110.6" text-anchor="end" textLength="50.5" lengthAdjust="spacingAndGlyphs">56234</text>
<text x="1061.5" y="150.0" text-anchor="end" textLength="50.5" lengthAdjust="spacingAndGlyphs">31623</text>
<text x="1061.5" y="189.3" text-anchor="end" textLength="50.5" lengthAdjust="spacingAndGlyphs">17783</text>
<text x="1061.5" y="228.6" text-anchor="end" textLength="50.5" lengthAdjust="spacingAndGlyphs">10000</text>
<text x="1061.5" y="268.0" text-anchor="end" textLength="60.6" lengthAdjust="spacingAndGlyphs">5623.4</text>
<text x="1061.5" y="307.3" text-anchor="end" textLength="60.6" lengthAdjust="spacingAndGlyphs">3162.3</text>
<text x="1061.5" y="346.6" text-anchor="end" textLength="60.6" lengthAdjust="spacingAndGlyphs">1778.3</text>
<text x="1061.5" y="386.0" text-anchor="end" textLength="60.6" lengthAdjust="spacingAndGlyphs">1000.0</text>
<text x="1061.5" y="425.3" text-anchor="end" textLength="60.6" lengthAdjust="spacingAndGlyphs">562.34</text>
<text x="1061.5" y="464.6" text-anchor="end" textLength="60.6" lengthAdjust="spacingAndGlyphs">316.23</text>
<text x="1061.5" y="504.0" text-anchor="end" textLength="60.6" lengthAdjust="spacingAndGlyphs">177.83</text>
<text x="1061.5" y="543.3" text-anchor="end" textLength="60.6" lengthAdjust="spacingAndGlyphs">100.00</text>
</g>
<path d="M988.2 64.0 L994 58.4 V69.6 Z M988.2 103.3 L994 97.7 V108.9 Z M988.2 142.7 L994 137.1 V148.3 Z M988.2 182.0 L994 176.4 V187.6 Z M988.2 221.3 L994 215.7 V226.9 Z M988.2 260.7 L994 255.1 V266.3 Z M988.2 300.0 L994 294.4 V305.6 Z M988.2 339.3 L994 333.7 V344.9 Z M988.2 378.7 L994 373.1 V384.3 Z M988.2 418.0 L994 412.4 V423.6 Z M988.2 457.3 L994 451.7 V462.9 Z M988.2 496.7 L994 491.1 V502.3 Z M988.2 536.0 L994 530.4 V541.6 Z" fill="#fff"/>
</svg>

<span class="t" id="t25" style="left:1078px;top:50px;font-size:9.8px;color:#f4f4f4;transform:scaleX(0.7186);">チャンネル</span>
<div class="sel" style="left:1080px;top:66px;width:110px;height:20px"><svg width="8" height="5" viewBox="0 0 8 5" fill="none" stroke="#b0b0b0" stroke-width="1"><path d="M0.7 0.8 L4 4.1 L7.3 0.8"/></svg></div>
<span class="t" id="t26" style="left:1088px;top:69.3px;font-size:9.3px;color:#e6e6e6;transform:scaleX(0.9718);">CIE Y (Luminance)</span>
<span class="t" id="t27" style="left:1077.6px;top:93.8px;font-size:9.8px;color:#f4f4f4;transform:scaleX(0.6832);">カラーバー</span>
<div class="sel" style="left:1080px;top:110px;width:110px;height:20px"><svg width="8" height="5" viewBox="0 0 8 5" fill="none" stroke="#b0b0b0" stroke-width="1"><path d="M0.7 0.8 L4 4.1 L7.3 0.8"/></svg></div>
<span class="t" id="t28" style="left:1088.6px;top:112.8px;font-size:9.3px;color:#e6e6e6;transform:scaleX(1.0061);">Turbo</span>
<span class="t" id="t29" style="left:1077.6px;top:136.5px;font-size:9.8px;color:#f4f4f4;transform:scaleX(0.7543);">カラーバー 目盛り</span>
<div class="sel" style="left:1080px;top:153px;width:110px;height:20px"><svg width="8" height="5" viewBox="0 0 8 5" fill="none" stroke="#b0b0b0" stroke-width="1"><path d="M0.7 0.8 L4 4.1 L7.3 0.8"/></svg></div>
<span class="t" id="t30" style="left:1088.6px;top:156px;font-size:9.3px;color:#e6e6e6;transform:scaleX(0.9919);">対数目盛</span>
<span class="t" id="t31" style="left:1077.6px;top:180.2px;font-size:9.8px;color:#f4f4f4;transform:scaleX(0.7864);">カラーバー 最大値</span>
<div class="inp" style="left:1080px;top:195px;width:65px;height:20px"></div>
<span class="t" id="t32" style="left:1088.6px;top:198.3px;font-size:9.3px;color:#e6e6e6;transform:scaleX(0.9764);">100000</span>
<div class="btn" style="left:1151px;top:195px;width:39px;height:20px"></div>
<span class="t" id="t33" style="left:1160px;top:198.3px;font-size:9.2px;font-weight:bold;color:#fff;transform:scaleX(0.9990);">Auto</span>
<div class="track" style="left:1080px;top:224px;width:110px"></div><div class="thumb" style="left:1173px;top:220px;width:5px;height:12px"></div>
<span class="t" id="t34" style="left:1077.6px;top:239.8px;font-size:9.8px;color:#f4f4f4;transform:scaleX(0.7864);">カラーバー 最小値</span>
<div class="inp" style="left:1080px;top:257px;width:65px;height:20px"></div>
<span class="t" id="t35" style="left:1088.6px;top:260px;font-size:9.3px;color:#e6e6e6;transform:scaleX(0.9603);">100</span>
<div class="btn" style="left:1151px;top:257px;width:39px;height:20px"></div>
<span class="t" id="t36" style="left:1160px;top:260px;font-size:9.2px;font-weight:bold;color:#fff;transform:scaleX(0.9990);">Auto</span>
<div class="track" style="left:1080px;top:285px;width:110px"></div><div class="thumb" style="left:1138px;top:281px;width:5px;height:12px"></div>
<span class="t" id="t37" style="left:1077.6px;top:301.7px;font-size:9.8px;color:#f4f4f4;transform:scaleX(0.7796);">飽和したピクセル</span>
<div class="sel" style="left:1080px;top:317px;width:110px;height:20px"><svg width="8" height="5" viewBox="0 0 8 5" fill="none" stroke="#b0b0b0" stroke-width="1"><path d="M0.7 0.8 L4 4.1 L7.3 0.8"/></svg></div>
<span class="t" id="t38" style="left:1088.6px;top:320.2px;font-size:9.3px;color:#e6e6e6;transform:scaleX(0.8265);">ピンクで色付け</span>
<div class="btn" style="left:1075px;top:490px;width:117px;height:19px"></div>
<span class="t" id="t39" style="left:1100.8px;top:492.6px;font-size:9.2px;font-weight:bold;color:#fff;transform:scaleX(1.0217);">oT-Record設定</span>
<div class="btn" style="left:1075px;top:521px;width:117px;height:19px"></div>
<span class="t" id="t40" style="left:1117px;top:523.6px;font-size:9.2px;font-weight:bold;color:#fff;transform:scaleX(0.9088);">書き出し</span>
<div class="track" style="left:22px;top:566px;width:1153px;height:5px;background:#747474"></div>
<div class="a" style="left:581.5px;top:561.5px;width:13px;height:13px;border-radius:50%;background:#12a9da"></div>
<svg class="a" style="left:440px;top:588px" width="200" height="24" viewBox="440 588 200 24" fill="none" stroke="#e8e8e8" stroke-width="1.1" font-family="Liberation Sans, sans-serif">
<path d="M447.2 592.5 V607 M458.6 599.8 H450.4 M453.6 596.2 L450 599.8 L453.6 603.4"/>
<path d="M637.5 592.5 V607 M626.6 599.8 H635 M631.6 596.2 L635.2 599.8 L631.6 603.4"/>
<g id="bk"><path d="M477.6 594.6 A6 6 0 1 1 471.9 598.4" /><path d="M478.2 592 L475.2 594.6 L478.2 597.2 Z" fill="#e8e8e8" stroke-width="0.6"/></g>
<use href="#bk" x="26.1"/><use href="#bk" x="52"/>
<g id="fw"><path d="M555.7 594.6 A6 6 0 1 0 561.4 598.4" /><path d="M555.1 592 L558.1 594.6 L555.1 597.2 Z" fill="#e8e8e8" stroke-width="0.6"/></g>
<use href="#fw" x="26.1"/><use href="#fw" x="52.3"/>
<g fill="#e8e8e8" stroke="none" font-size="6" text-anchor="middle" >
<text x="477.8" y="603" font-size="5.2" textLength="8.6" lengthAdjust="spacingAndGlyphs">100</text><text x="503.8" y="603" font-size="5.6">10</text><text x="529.7" y="603">1</text>
<text x="555.7" y="603">1</text><text x="581.8" y="603" font-size="5.6">10</text><text x="608" y="603" font-size="5.2" textLength="8.6" lengthAdjust="spacingAndGlyphs">100</text>
</g>
</svg>

<div class="inp" style="left:662px;top:590px;width:45px;height:20px"></div>
<span class="t" id="t41" style="left:684.4px;top:592.8px;font-size:9.3px;color:#e6e6e6;transform:scaleX(0.9732);">165</span>
<span class="t" id="t42" style="left:713.3px;top:592.8px;font-size:9.3px;color:#e6e6e6;transform:scaleX(1.0058);">/  335</span>
<svg class="a" style="left:1088px;top:572px" width="80" height="52" viewBox="1088 572 80 52">
<g id="lm"><path d="M1091.8 584.4 Q1092.4 580.6 1095 578.6 L1096.4 578.6 L1095.5 584.4 Z" fill="#fff"/><path d="M1095.6 578 Q1097.6 575.4 1101.9 574.8 L1101.9 578.2 L1096.4 578.2 Z" fill="#19b0dc"/></g>
<use href="#lm" transform="rotate(180 1126.4 598.05)"/>
<text x="1106" y="603.6" font-family="Liberation Sans, sans-serif" font-size="16.5" fill="#fff" stroke="#fff" stroke-width="0.35" textLength="41.4" lengthAdjust="spacingAndGlyphs">OCT<tspan font-size="22.6">e</tspan>C</text>
</svg>

<div id="status" class="a">
<svg class="a" style="left:3px;top:2.5px" width="10" height="10" viewBox="0 0 10 10" fill="none" stroke="#ddd" stroke-width="0.9"><path d="M0.5 1.6 H5.6 M3 0.4 V1.6 M4.8 1.6 Q4 4.6 0.8 6.2 M1.6 3 Q2.6 5 4.6 6"/><path d="M5 9.6 L7.2 4.2 L9.4 9.6 M5.8 8 H8.6"/></svg>
</div>
<span class="t" id="t43" style="left:17.3px;top:623px;font-size:9.2px;color:#d8d8d8;transform:scaleX(0.9356);">English</span>
<span class="t" id="t44" style="left:51.8px;top:623px;font-size:9.2px;font-weight:bold;color:#fff;transform:scaleX(0.9107);">日本語</span>
<span class="t" id="t45" style="left:1062.5px;top:623px;font-size:9.2px;color:#d8d8d8;transform:scaleX(0.9273);">OCTEC Inc.  oT-Analyzer  ver 1.2.2</span>
</body></html>
